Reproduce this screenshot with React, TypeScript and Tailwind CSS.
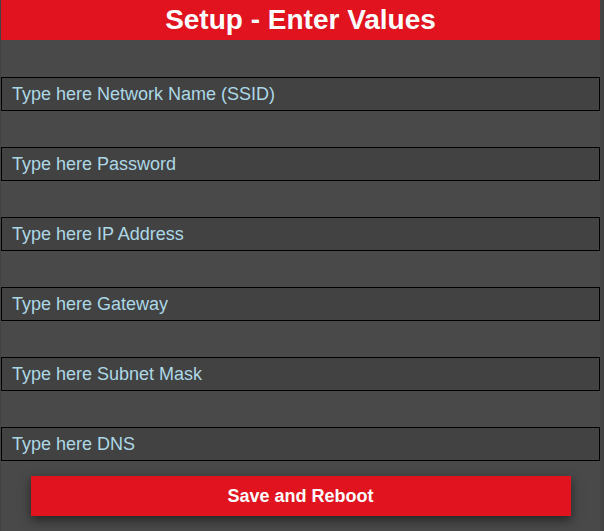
import React from 'react';

const fields = [
  'Type here Network Name (SSID)',
  'Type here Password',
  'Type here IP Address',
  'Type here Gateway',
  'Type here Subnet Mask',
  'Type here DNS',
];

export default function App() {
  return (
    <div className="min-h-[531px] bg-[#434343] font-['Liberation_Sans',Arial,sans-serif]">
      <div className="ml-px min-h-[531px] w-[600px] border-r border-[#474747] bg-[#494949]">
        <h1 className="h-10 bg-[#e0131f] text-center text-[28px] font-bold leading-10 text-white">
          Setup - Enter Values
        </h1>
        <form className="flex flex-col gap-9 pt-[37px]">
          {fields.map((f) => (
            <input
              key={f}
              type="text"
              placeholder={f}
              className="h-[34px] w-full border border-black bg-[#424242] px-2.5 text-lg text-[#add8e6] placeholder:text-[#add8e6] outline-none"
            />
          ))}
        </form>
        <div className="flex justify-center pt-[15px]">
          <button
            type="button"
            className="h-10 w-[540px] bg-[#e0131f] text-lg font-bold text-white shadow-[0_4px_10px_rgba(0,0,0,0.5)]"
          >
            Save and Reboot
          </button>
        </div>
      </div>
    </div>
  );
}
